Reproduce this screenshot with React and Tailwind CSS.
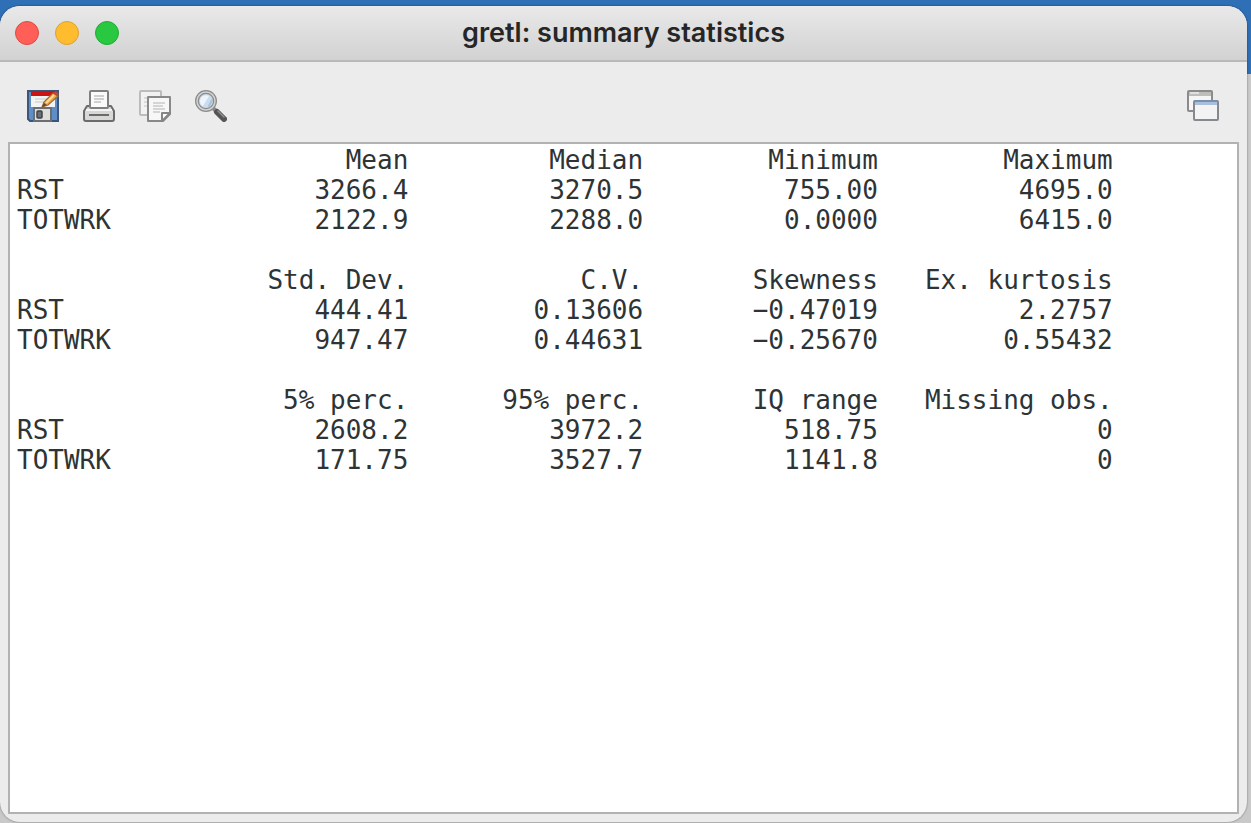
import React from 'react'

const tables = [
  {
    heads: ["Mean", "Median", "Minimum", "Maximum"],
    rows: [
      ["RST", "3266.4", "3270.5", "755.00", "4695.0"],
      ["TOTWRK", "2122.9", "2288.0", "0.0000", "6415.0"],
    ],
  },
  {
    heads: ["Std. Dev.", "C.V.", "Skewness", "Ex. kurtosis"],
    rows: [
      ["RST", "444.41", "0.13606", "−0.47019", "2.2757"],
      ["TOTWRK", "947.47", "0.44631", "−0.25670", "0.55432"],
    ],
  },
  {
    heads: ["5% perc.", "95% perc.", "IQ range", "Missing obs."],
    rows: [
      ["RST", "2608.2", "3972.2", "518.75", "0"],
      ["TOTWRK", "171.75", "3527.7", "1141.8", "0"],
    ],
  },
]

function SaveIcon() {
  return (
    <svg viewBox="0 0 32 32" className="size-8">
      <path d="M1 1h30v30H3l-2-2z" fill="#5f8dc8" stroke="#3d5578" strokeWidth="2" />
      <path d="M4 2h24v15H4z" fill="#f3f3f3" />
      <path d="M4 1h24v5H4z" fill="#cc1212" />
      <path d="M8 9h13M8 12h9" stroke="#d6d6d6" strokeWidth="1.5" />
      <path d="M7 18h17v13H7z" fill="#dededb" stroke="#6b6f74" strokeWidth="2" />
      <rect x="10" y="21" width="5" height="7" rx="1" fill="#6c7076" stroke="#3f4348" strokeWidth="1.5" />
      <path d="M15 17l2-5L26 3l5 3-10 9z" fill="#e9a84a" stroke="#a3692c" strokeWidth="1.2" />
      <path d="M19 13l8-8" stroke="#ffd994" strokeWidth="2" />
      <path d="M26 3l3-2 3 3-2 2z" fill="#b84a3a" />
      <path d="M15 17l2-4 3 2z" fill="#63472b" />
    </svg>
  )
}

function PrintIcon() {
  return (
    <svg viewBox="0 0 32 32" className="size-8" strokeLinejoin="round">
      <path d="M4 16h24l3 5v8q0 2-2 2H3q-2 0-2-2v-8z" fill="#d8d8d6" stroke="#6b6b6b" strokeWidth="2" />
      <rect x="7" y="1" width="18" height="17" rx="1" fill="#fafafa" stroke="#808080" strokeWidth="2" />
      <path d="M11 6h10M11 9h10M11 12h7" stroke="#c2c2c2" strokeWidth="1.5" />
      <path d="M3 20h26" stroke="#f4f4f4" strokeWidth="2" />
      <path d="M6 25h20" stroke="#6b6b6b" strokeWidth="2" />
    </svg>
  )
}

function CopyIcon() {
  return (
    <svg viewBox="0 0 32 32" className="size-8" strokeLinejoin="round">
      <rect x="1" y="1" width="21" height="24" rx="1" fill="#f2f2f2" stroke="#bcbcbc" strokeWidth="2" />
      <path d="M5 8h4M5 12h4M5 16h4" stroke="#d2d2d2" strokeWidth="1.5" />
      <path d="M9 7h22v17l-7 7H9z" fill="#f7f7f7" stroke="#898989" strokeWidth="2" />
      <path d="M14 13h12M14 16h10M14 19h12M14 22h7" stroke="#cacaca" strokeWidth="1.5" />
      <path d="M31 23h-8v8z" fill="#fff" stroke="#858585" strokeWidth="2" />
    </svg>
  )
}

function FindIcon() {
  return (
    <svg viewBox="0 0 32 32" className="size-8" strokeLinecap="round">
      <path d="M18 18l4 4" stroke="#8d8d8d" strokeWidth="4" />
      <path d="M22 22l7 7" stroke="#555" strokeWidth="6" />
      <path d="M23 21l6 6" stroke="#8f8f8f" strokeWidth="1.5" />
      <circle cx="11" cy="11" r="9" fill="#cbdcec" stroke="#8b8b8b" strokeWidth="4" />
      <circle cx="11" cy="11" r="9" fill="none" stroke="#d2d2d2" strokeWidth="1.5" />
      <path d="M5 11a6 6 0 0 1 9-5l-6 10q-3-1-3-5z" fill="#edf4fa" />
      <path d="M14 16l3-6" stroke="#a9c3dc" strokeWidth="2" />
    </svg>
  )
}

function WindowsIcon() {
  return (
    <svg viewBox="0 0 32 32" className="size-8" strokeLinejoin="round">
      <rect x="1" y="1" width="24" height="20" rx="1" fill="#f5f5f5" stroke="#8b8b8b" strokeWidth="2" />
      <path d="M2 2h22v4H2z" fill="#bdbdb9" />
      <path d="M3 3h9" stroke="#e0e0e0" strokeWidth="2" />
      <rect x="7" y="11" width="24" height="19" rx="1" fill="#f3f3f3" stroke="#85888d" strokeWidth="2" />
      <path d="M8 11h22v4H8z" fill="#a9bfdb" />
      <path d="M7 11h24" stroke="#7790b2" strokeWidth="2" />
    </svg>
  )
}

function Stats({ heads, rows }) {
  return (
    <table className="table-fixed w-[70ch] border-collapse whitespace-pre">
      <colgroup>
        <col className="w-[10ch]" />
        <col className="w-[15ch]" />
        <col className="w-[15ch]" />
        <col className="w-[15ch]" />
        <col className="w-[15ch]" />
      </colgroup>
      <thead>
        <tr>
          <td className="p-0"></td>
          {heads.map((h) => (
            <th key={h} scope="col" className="p-0 text-right font-normal">{h}</th>
          ))}
        </tr>
      </thead>
      <tbody>
        {rows.map(([name, ...values]) => (
          <tr key={name}>
            <th scope="row" className="p-0 text-left font-normal">{name}</th>
            {values.map((v, i) => (
              <td key={i} className="p-0 text-right">{v}</td>
            ))}
          </tr>
        ))}
      </tbody>
    </table>
  )
}

function App() {
  return (
    <div className="min-h-screen flex flex-col pt-[6px] pr-1 pb-px bg-[linear-gradient(#2f6fb5_74px,#c9c9c9_74px)]">
      <main className="flex-1 flex flex-col rounded-[20px] overflow-hidden bg-[#ececec] shadow-[0_0_2px_rgba(0,0,0,0.5)]">
        <header className="h-14 shrink-0 grid grid-cols-[1fr_auto_1fr] items-center px-[15px] border-b-2 border-[#b9b9b9] bg-linear-to-b from-[#e9e9e9] to-[#d2d2d2]">
          <div className="flex gap-4">
            <button aria-label="Close" className="size-6 rounded-full bg-[#ff5f57] border border-[#dc4a44]"></button>
            <button aria-label="Minimize" className="size-6 rounded-full bg-[#febc2e] border border-[#dca034]"></button>
            <button aria-label="Zoom" className="size-6 rounded-full bg-[#28c840] border border-[#24aa36]"></button>
          </div>
          <h1 className="font-[Inter,sans-serif] font-semibold text-[27px] leading-8 text-[#262626]">gretl: summary statistics</h1>
        </header>
        <div className="h-20 shrink-0 flex items-center gap-6 pl-[27px] pr-7 pt-2">
          <button aria-label="Save"><SaveIcon /></button>
          <button aria-label="Print"><PrintIcon /></button>
          <button aria-label="Copy"><CopyIcon /></button>
          <button aria-label="Find"><FindIcon /></button>
          <button aria-label="Windows" className="ml-auto"><WindowsIcon /></button>
        </div>
        <section className="flex-1 mx-2 mb-2 px-[7px] pt-px bg-white border-2 border-[#b2b2b2] flex flex-col gap-[30px] overflow-x-auto font-['DejaVu_Sans_Mono',monospace] text-[26px] leading-[30px] text-[#2e3436]">
          {tables.map((t) => (
            <Stats key={t.heads[0]} heads={t.heads} rows={t.rows} />
          ))}
        </section>
      </main>
    </div>
  )
}

export default App
